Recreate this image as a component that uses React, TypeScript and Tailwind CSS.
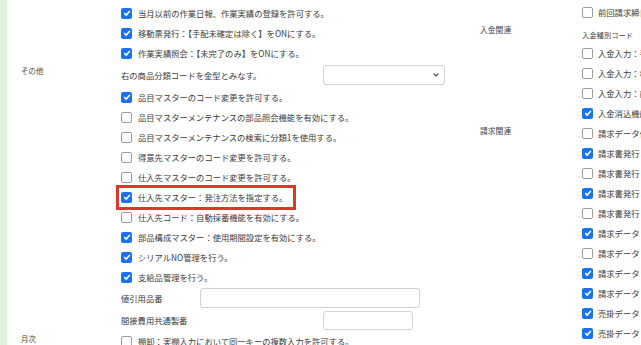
import React from 'react';

type Row =
  | { kind: 'check'; label: string; checked: boolean; side?: string; mark?: boolean }
  | { kind: 'select'; label: string; side?: string }
  | { kind: 'input'; label: string; labelW: string; inputW: string; side?: string };

const font = { fontFamily: '"Noto Sans CJK JP", "Noto Sans", sans-serif' };

function Box({ checked }: { checked: boolean }) {
  if (checked) {
    return (
      <span className="flex h-[11px] w-[11px] shrink-0 items-center justify-center rounded-[2px] bg-[#1b72ef]">
        <svg width="8" height="8" viewBox="0 0 10 10">
          <path d="M1.6 5.2 L4 7.6 L8.6 2.4" fill="none" stroke="white" strokeWidth="1.9" />
        </svg>
      </span>
    );
  }
  return <span className="h-[11px] w-[11px] shrink-0 rounded-[2px] border border-[#9d9d9d] bg-white" />;
}

const mainRows: Row[] = [
  { kind: 'check', label: '当月以前の作業日報、作業実績の登録を許可する。', checked: true },
  { kind: 'check', label: '移動票発行：【手配未確定は除く】をONにする。', checked: true },
  { kind: 'check', label: '作業実績照会：【未完了のみ】をONにする。', checked: true },
  { kind: 'select', label: '右の商品分類コードを金型とみなす。', side: 'その他' },
  { kind: 'check', label: '品目マスターのコード変更を許可する。', checked: true },
  { kind: 'check', label: '品目マスターメンテナンスの部品照会機能を有効にする。', checked: false },
  { kind: 'check', label: '品目マスターメンテナンスの検索に分類1を使用する。', checked: false },
  { kind: 'check', label: '得意先マスターのコード変更を許可する。', checked: false },
  { kind: 'check', label: '仕入先マスターのコード変更を許可する。', checked: false },
  { kind: 'check', label: '仕入先マスター：発注方法を指定する。', checked: true, mark: true },
  { kind: 'check', label: '仕入先コード：自動採番機能を有効にする。', checked: false },
  { kind: 'check', label: '部品構成マスター：使用期間設定を有効にする。', checked: true },
  { kind: 'check', label: 'シリアルNO管理を行う。', checked: true },
  { kind: 'check', label: '支給品管理を行う。', checked: true },
  { kind: 'input', label: '値引用品番', labelW: 'w-[79px]', inputW: 'w-[220px] h-[20px]' },
  { kind: 'input', label: '間接費用共通製番', labelW: 'w-[202px]', inputW: 'w-[90px] h-[19px]' },
  { kind: 'check', label: '棚卸：実棚入力において同一キーの複数入力を許可する。', checked: false, side: '月次' },
];

const rightRows: { label: string; checked: boolean; side?: string }[] = [
  { label: '入金入力：手形情報を入力する。', checked: false },
  { label: '入金入力：相殺を許可する。', checked: false },
  { label: '入金入力：前受金を使用する。', checked: false },
  { label: '入金消込機能を使用する。', checked: true },
  { label: '請求データ作成時に締日を確認する。', checked: false, side: '請求関連' },
  { label: '請求書発行：前回残高を印字する。', checked: true },
  { label: '請求書発行：明細を印字しない。', checked: false },
  { label: '請求書発行：鑑を印字する。', checked: true },
  { label: '請求書発行：控えを出力する。', checked: false },
  { label: '請求データ：消費税を一括計算する。', checked: true },
  { label: '請求データ：端数を切り上げる。', checked: false },
  { label: '請求データ：入金予定日を設定する。', checked: true },
  { label: '請求データ：担当者別に集計する。', checked: true },
  { label: '売掛データ：残高を更新する。', checked: true },
  { label: '売掛データ：月次で締める。', checked: true },
];

function MainRow({ row }: { row: Row }) {
  const h = row.kind === 'select' ? 'h-[24px]' : row.kind === 'input' ? 'h-[22px]' : 'h-[20px]';
  return (
    <div className={`flex ${h} shrink-0 items-center`}>
      <div className="flex h-full w-[114px] shrink-0 items-center pl-[14px] text-[7.5px] text-[#444]">
        <span className={row.kind === 'select' ? '-mt-[8px]' : '-mt-[5px]'}>{row.side}</span>
      </div>
      {row.kind === 'check' && !row.mark && (
        <div className="flex items-center gap-[6px]">
          <Box checked={row.checked} />
          <span>{row.label}</span>
        </div>
      )}
      {row.kind === 'check' && row.mark && (
        <div className="-ml-[5px] flex h-[25px] w-[180px] shrink-0 items-center gap-[6px] border-[3px] border-[#d8392c] pl-[2px]">
          <Box checked={row.checked} />
          <span>{row.label}</span>
        </div>
      )}
      {row.kind === 'select' && (
        <div className="flex items-center">
          <span className="w-[202px]">{row.label}</span>
          <div className="flex h-[20px] w-[122px] items-center justify-end rounded-[3px] border border-[#d2d2d2] pr-[5px]">
            <svg width="6" height="4" viewBox="0 0 6 4">
              <path d="M0.6 0.6 L3 3 L5.4 0.6" fill="none" stroke="#444" strokeWidth="1.2" />
            </svg>
          </div>
        </div>
      )}
      {row.kind === 'input' && (
        <div className="flex items-center">
          <span className={row.labelW}>{row.label}</span>
          <div className={`${row.inputW} rounded-[3px] border border-[#d2d2d2] bg-white`} />
        </div>
      )}
    </div>
  );
}

export default function App() {
  return (
    <div
      className="flex h-[345px] w-[641px] overflow-hidden whitespace-nowrap bg-white text-[8.3px] text-[#3a3a3a]"
      style={font}
    >
      <div className="w-[7px] shrink-0 bg-[#dff0dc]" />
      <div className="flex w-[473px] shrink-0 flex-col pt-[3px]">
        {mainRows.map((r, i) => (
          <MainRow key={i} row={r} />
        ))}
      </div>
      <div className="flex flex-1 flex-col pt-[2px]">
        <div className="flex h-[20px] items-center">
          <div className="w-[102px] shrink-0" />
          <div className="flex items-center gap-[5px]">
            <Box checked={false} />
            <span>前回請求締日を表示する。</span>
          </div>
        </div>
        <div className="flex h-[21px]">
          <div className="w-[102px] shrink-0 pt-[2px] text-[7.8px] text-[#444]">入金関連</div>
          <div className="flex items-end pb-[2px] text-[7.3px] text-[#444]">入金種別コード</div>
        </div>
        {rightRows.map((r, i) => (
          <div key={i} className="flex h-[20px] items-center">
            <div className="w-[102px] shrink-0 text-[7.8px] text-[#444]">
              <span className="relative -top-[2px]">{r.side}</span>
            </div>
            <div className="flex items-center gap-[5px]">
              <Box checked={r.checked} />
              <span>{r.label}</span>
            </div>
          </div>
        ))}
      </div>
    </div>
  );
}
